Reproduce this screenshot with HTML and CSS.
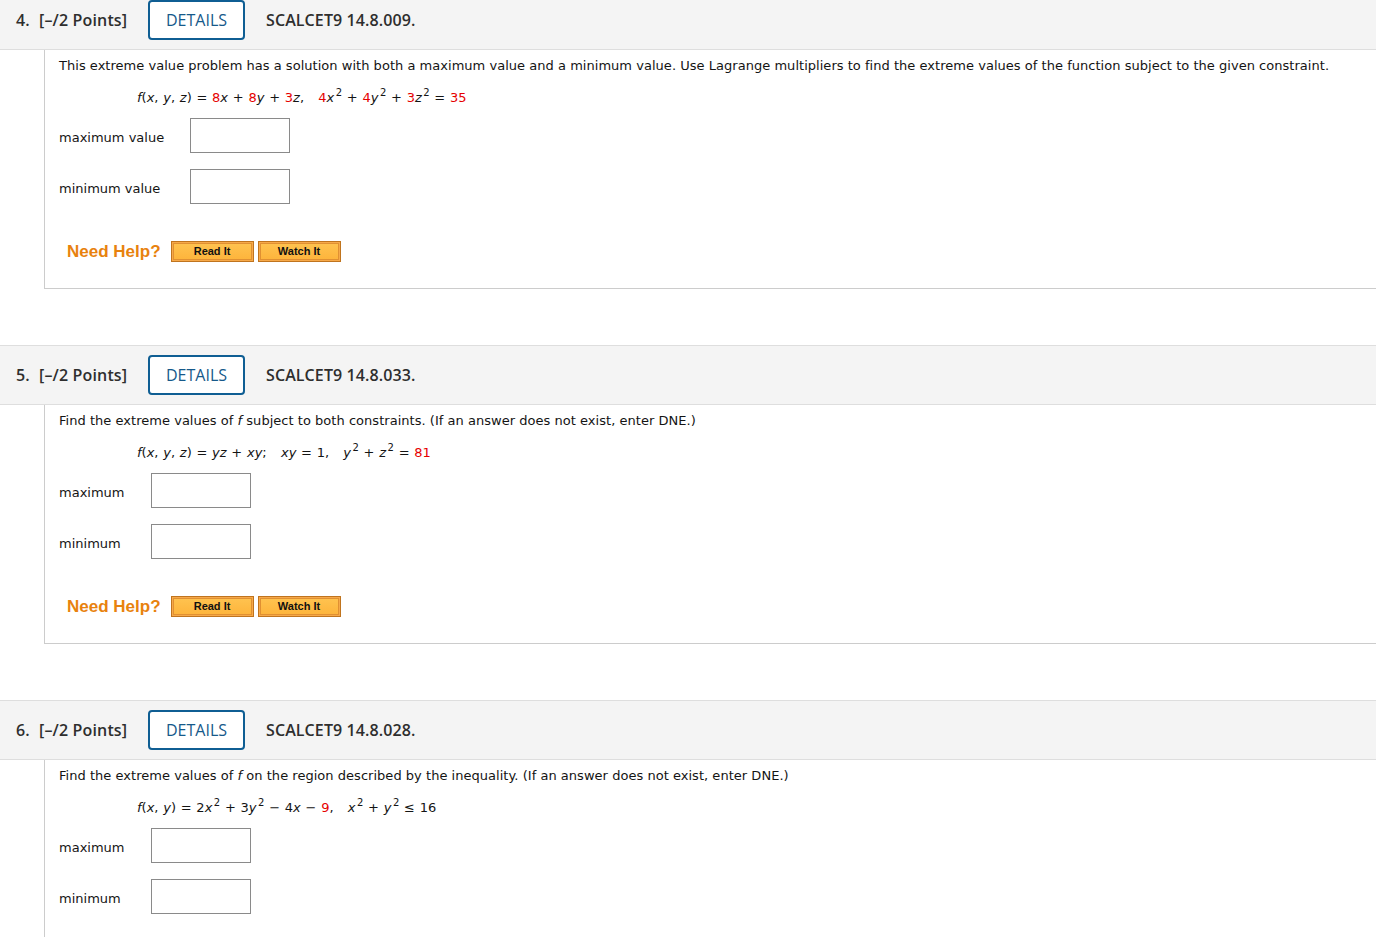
FILE: index.html
```html
<!DOCTYPE html>
<html>
<head>
<meta charset="utf-8">
<link rel="stylesheet" href="styles.css">
</head>
<body>
<div class="page">

  <section class="question first">
    <div class="q-header">
      <span class="q-num">4.</span>
      <span class="q-points">[–/2 Points]</span>
      <span class="details-btn">DETAILS</span>
      <span class="q-code">SCALCET9 14.8.009.</span>
    </div>
    <div class="q-body">
      <p class="q-text">This extreme value problem has a solution with both a maximum value and a minimum value. Use Lagrange multipliers to find the extreme values of the function subject to the given constraint.</p>
      <p class="formula"><i>f</i>(<i>x</i>, <i>y</i>, <i>z</i>) = <span class="red">8</span><i>x</i> + <span class="red">8</span><i>y</i> + <span class="red">3</span><i>z</i>,&nbsp;&nbsp; <span class="red">4</span><i>x</i><sup>2</sup> + <span class="red">4</span><i>y</i><sup>2</sup> + <span class="red">3</span><i>z</i><sup>2</sup> = <span class="red">35</span></p>
      <div class="answers wide">
        <span class="ans-label">maximum value</span><span class="ans-box"></span>
        <span class="ans-label">minimum value</span><span class="ans-box"></span>
      </div>
      <div class="help-row">
        <span class="need-help">Need Help?</span>
        <span class="help-btn read">Read It</span>
        <span class="help-btn">Watch It</span>
      </div>
    </div>
  </section>

  <section class="question">
    <div class="q-header">
      <span class="q-num">5.</span>
      <span class="q-points">[–/2 Points]</span>
      <span class="details-btn">DETAILS</span>
      <span class="q-code">SCALCET9 14.8.033.</span>
    </div>
    <div class="q-body">
      <p class="q-text">Find the extreme values of <i>f</i> subject to both constraints. (If an answer does not exist, enter DNE.)</p>
      <p class="formula"><i>f</i>(<i>x</i>, <i>y</i>, <i>z</i>) = <i>yz</i> + <i>xy</i>;&nbsp;&nbsp; <i>xy</i> = 1,&nbsp;&nbsp; <i>y</i><sup>2</sup> + <i>z</i><sup>2</sup> = <span class="red">81</span></p>
      <div class="answers">
        <span class="ans-label">maximum</span><span class="ans-box"></span>
        <span class="ans-label">minimum</span><span class="ans-box"></span>
      </div>
      <div class="help-row">
        <span class="need-help">Need Help?</span>
        <span class="help-btn read">Read It</span>
        <span class="help-btn">Watch It</span>
      </div>
    </div>
  </section>

  <section class="question">
    <div class="q-header">
      <span class="q-num">6.</span>
      <span class="q-points">[–/2 Points]</span>
      <span class="details-btn">DETAILS</span>
      <span class="q-code">SCALCET9 14.8.028.</span>
    </div>
    <div class="q-body">
      <p class="q-text">Find the extreme values of <i>f</i> on the region described by the inequality. (If an answer does not exist, enter DNE.)</p>
      <p class="formula"><i>f</i>(<i>x</i>, <i>y</i>) = 2<i>x</i><sup>2</sup> + 3<i>y</i><sup>2</sup> − 4<i>x</i> − <span class="red">9</span>,&nbsp;&nbsp; <i>x</i><sup>2</sup> + <i>y</i><sup>2</sup> ≤ 16</p>
      <div class="answers">
        <span class="ans-label">maximum</span><span class="ans-box"></span>
        <span class="ans-label">minimum</span><span class="ans-box"></span>
      </div>
      <div class="help-row">
        <span class="need-help">Need Help?</span>
        <span class="help-btn read">Read It</span>
        <span class="help-btn">Watch It</span>
      </div>
    </div>
  </section>

</div>
</body>
</html>
```

FILE: styles.css
```css
html, body {
  margin: 0;
  padding: 0;
  background: #fff;
}

body {
  font-family: "DejaVu Sans", Verdana, sans-serif;
  font-size: 13px;
  color: #141414;
  overflow: hidden;
}

.page {
  margin-top: -10px;
}

.question {
  margin-bottom: 56px;
}

.q-header {
  display: flex;
  align-items: center;
  height: 58px;
  background: #f4f4f4;
  border-top: 1px solid #dedede;
  border-bottom: 1px solid #dedede;
  padding-left: 16px;
  font-family: "Open Sans", sans-serif;
  font-weight: 600;
  font-size: 16px;
  color: #2e2e2e;
}

.q-num {
  width: 23px;
}

.q-points {
  width: 109px;
  letter-spacing: 0.15px;
}

.details-btn {
  box-sizing: border-box;
  width: 97px;
  height: 40px;
  border: 2px solid #0f5e93;
  border-radius: 4px;
  display: flex;
  align-items: center;
  justify-content: center;
  font-weight: 400;
  color: #16598a;
  background: #fff;
  margin-right: 21px;
}

.q-code {
  letter-spacing: 0.1px;
}

.q-body {
  margin-left: 44px;
  border-left: 1px solid #cccccc;
  border-bottom: 1px solid #cccccc;
  padding: 7px 0 25px 14px;
}

.q-text {
  margin: 0;
  line-height: 18px;
  white-space: nowrap;
  letter-spacing: 0.03px;
}

.formula {
  margin: 14px 0 0 78px;
  line-height: 18px;
  white-space: nowrap;
  word-spacing: 0.6px;
}

.formula sup {
  font-size: 10px;
  line-height: 0;
  vertical-align: 0;
  position: relative;
  top: -6px;
  padding-left: 1.5px;
}

.red {
  color: #e60000;
}

.answers {
  margin-top: 11px;
  display: grid;
  grid-template-columns: 92px 100px;
  row-gap: 16px;
  align-items: center;
}

.answers.wide {
  grid-template-columns: 131px 100px;
}

.ans-label {
  position: relative;
  top: 1.5px;
}

.ans-box {
  box-sizing: border-box;
  width: 100px;
  height: 35px;
  border: 1px solid #8a8a8a;
  background: #fff;
}

.help-row {
  margin-top: 35px;
  height: 24px;
  display: flex;
  align-items: center;
  padding-left: 8px;
}

.need-help {
  font-family: "Liberation Sans", Arial, sans-serif;
  font-weight: 700;
  font-size: 17px;
  color: #e8820e;
  margin-right: 10px;
  position: relative;
  top: 1px;
}

.help-btn {
  box-sizing: border-box;
  width: 83px;
  height: 21px;
  border: 1px solid #c0741e;
  box-shadow: inset 0 0 0 1px #f6a94a, inset 0 0 0 2px #e09032;
  background: linear-gradient(#ffc451, #fdb33a);
  font-family: "Liberation Sans", Arial, sans-serif;
  font-weight: 700;
  font-size: 11px;
  color: #111;
  display: flex;
  align-items: center;
  justify-content: center;
  margin-right: 4px;
}
```
